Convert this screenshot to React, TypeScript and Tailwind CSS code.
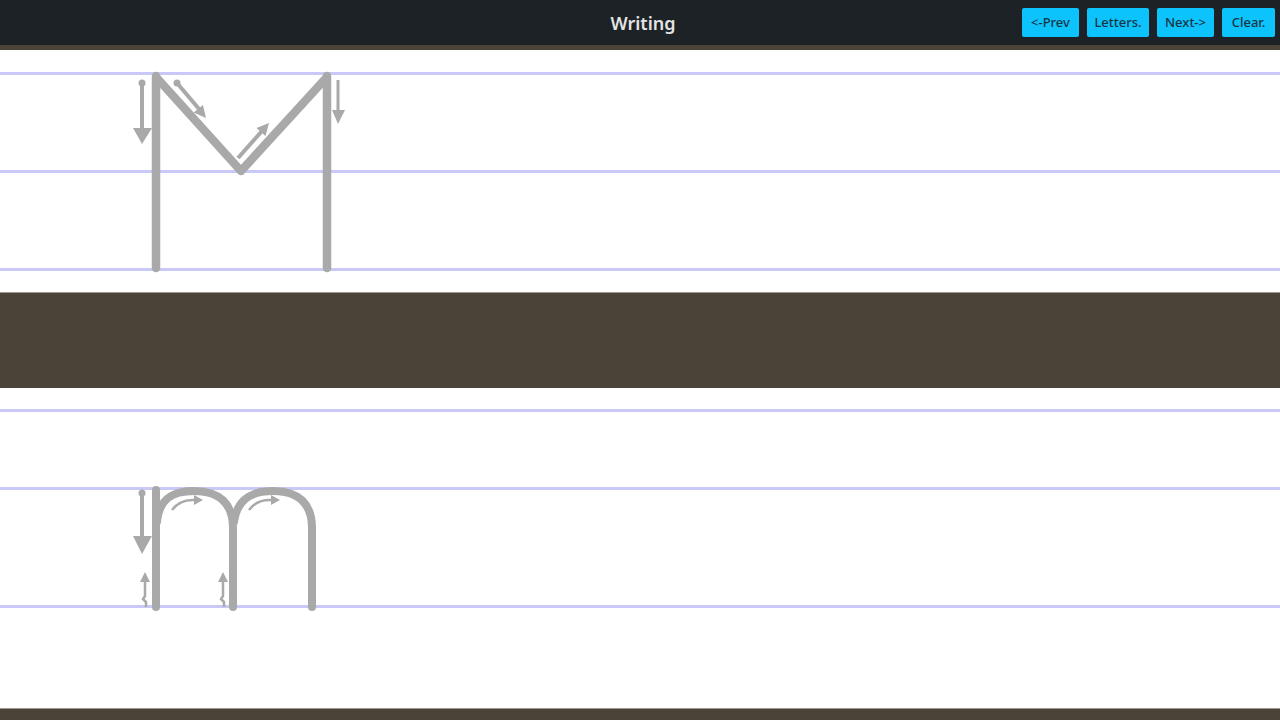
import React from 'react';

const GRAY = '#a9a9a9';

const Line = () => <div className="h-[3px] w-full bg-[#c9c9f7]" />;

const NavButton = ({ label, width }: { label: string; width: string }) => (
  <button
    className={`h-[29px] rounded-[2px] bg-[#0cc3fb] text-[13px] font-medium text-[#173445] [font-family:'Noto_Sans',sans-serif] ${width}`}
  >
    {label}
  </button>
);

// Upper case M with stroke-order arrows (panel coordinates)
const UpperM = () => (
  <svg className="absolute left-0 top-0" width="400" height="242" viewBox="0 0 400 242">
    <g stroke={GRAY} fill="none" strokeWidth="8.5">
      <line x1="156" y1="26" x2="156" y2="218" strokeLinecap="round" />
      <line x1="327" y1="26" x2="327" y2="218" strokeLinecap="round" />
      <polyline points="156,27 241,121 327,27" strokeLinejoin="round" />
    </g>
    <g stroke={GRAY} strokeWidth="4" fill={GRAY}>
      <circle cx="142" cy="33" r="3.5" stroke="none" />
      <line x1="142" y1="33" x2="142" y2="80" />
      <polygon points="133,78 152,78 142,94" stroke="none" />
      <circle cx="177" cy="33" r="3.5" stroke="none" />
      <line x1="177" y1="33" x2="199" y2="59" />
      <polygon points="193.7,62.6 202.9,55 206,68" stroke="none" />
      <line x1="238" y1="108" x2="262" y2="81" />
      <polygon points="265.5,86 256.5,78 269,73" stroke="none" />
      <line x1="338" y1="30" x2="338" y2="62" strokeWidth="3" />
      <polygon points="332,60 345,60 338,74" stroke="none" />
    </g>
  </svg>
);

// Lower case m with stroke-order arrows (panel coordinates)
const LowerM = () => (
  <svg className="absolute left-0 top-0" width="400" height="320" viewBox="0 0 400 320">
    <g stroke={GRAY} fill="none" strokeWidth="8" strokeLinecap="round">
      <line x1="156" y1="102" x2="156" y2="219" />
      <path d="M157 134 C159 112 171 103 194 103 C220 103 233 116 233 140 V219" />
      <path d="M234 134 C237 112 250 103 273 103 C299 103 312 116 312 140 V219" />
    </g>
    <g stroke={GRAY} fill={GRAY}>
      <circle cx="142" cy="105" r="3.5" stroke="none" />
      <line x1="142" y1="105" x2="142" y2="150" strokeWidth="4" />
      <polygon points="133,148 152,148 142,166" stroke="none" />
      <path d="M172 122 Q180 111 195 112" fill="none" strokeWidth="2.5" />
      <polygon points="194,107 194,117 203,112" stroke="none" />
      <path d="M249 122 Q257 111 272 112" fill="none" strokeWidth="2.5" />
      <polygon points="271,107 271,117 280,112" stroke="none" />
      <polyline points="145,192 145,208 143,211 146,214 146,219" fill="none" strokeWidth="2.5" />
      <polygon points="140,194 150,194 145,184" stroke="none" />
      <polyline points="223,192 223,208 221,211 224,214 224,219" fill="none" strokeWidth="2.5" />
      <polygon points="218,194 228,194 223,184" stroke="none" />
    </g>
  </svg>
);

export default function App() {
  return (
    <div className="flex h-[720px] w-[1280px] flex-col overflow-hidden bg-[#4a4338]">
      <header className="flex h-[50px] shrink-0 items-start border-b-[5px] border-[#4a4338] bg-[#1c2226]">
        <div className="relative flex h-[45px] w-full items-center justify-end gap-[8px] pr-[5px]">
          <h1 className="absolute left-[calc(50%+3px)] top-[10px] -translate-x-1/2 text-[18px] font-semibold text-[#e4e4e4] [font-family:'Noto_Sans',sans-serif]">
            Writing
          </h1>
          <NavButton label="<-Prev" width="w-[57px]" />
          <NavButton label="Letters." width="w-[62px]" />
          <NavButton label="Next->" width="w-[57px]" />
          <NavButton label="Clear." width="w-[53px]" />
        </div>
      </header>

      <section className="relative h-[242px] shrink-0 bg-white pt-[22px]">
        <Line />
        <div className="h-[95px]" />
        <Line />
        <div className="h-[95px]" />
        <Line />
        <UpperM />
      </section>

      <div className="h-[96px] shrink-0 border-t border-[#9d9890] bg-[#4a4338]" />

      <section className="relative h-[320px] shrink-0 bg-white pt-[21px]">
        <Line />
        <div className="h-[75px]" />
        <Line />
        <div className="h-[115px]" />
        <Line />
        <LowerM />
      </section>

      <div className="flex-1 border-t border-[#9d9890] bg-[#4a4338]" />
    </div>
  );
}
